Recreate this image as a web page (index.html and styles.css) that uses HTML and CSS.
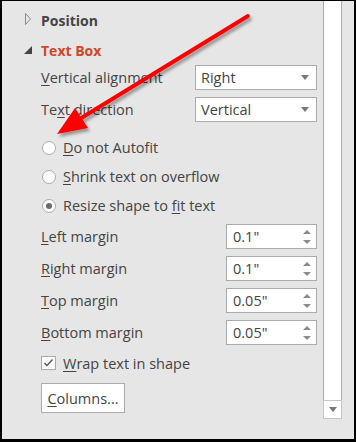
FILE: index.html
```html
<!DOCTYPE html>
<html lang="en">
<head>
  <meta charset="UTF-8" />
  <title>Format Shape - Text Box</title>
  <link rel="stylesheet" href="styles.css">
</head>
<body>

  <div class="frame">
    <div class="content">

      <div class="group-head">
        <svg class="caret" width="18" height="30"><polygon points="2.5,8.5 7.5,14 2.5,19.5" fill="none" stroke="#8a8a8a" stroke-width="1"/></svg>
        <span>Position</span>
      </div>
      <div class="group-head open">
        <svg class="caret" width="18" height="30"><polygon points="9,11 9,19 1,19" fill="#444"/></svg>
        <span>Text Box</span>
      </div>

      <div class="field">
        <label><u>V</u>ertical alignment</label>
        <div class="select"><span>Right</span><span class="drop"></span></div>
      </div>
      <div class="field">
        <label>Te<u>x</u>t direction</label>
        <div class="select"><span>Vertical</span><span class="drop"></span></div>
      </div>

      <div class="radios">
        <div class="radio-row"><span class="radio"></span><span><u>D</u>o not Autofit</span></div>
        <div class="radio-row"><span class="radio"></span><span><u>S</u>hrink text on overflow</span></div>
        <div class="radio-row"><span class="radio checked"></span><span>Resize shape to <u>f</u>it text</span></div>
      </div>

      <div class="spins">
        <div class="field">
          <label><u>L</u>eft margin</label>
          <div class="spin"><span>0.1"</span><span class="arrows"><span class="up"></span><span class="down"></span></span></div>
        </div>
        <div class="field">
          <label><u>R</u>ight margin</label>
          <div class="spin"><span>0.1"</span><span class="arrows"><span class="up"></span><span class="down"></span></span></div>
        </div>
        <div class="field">
          <label><u>T</u>op margin</label>
          <div class="spin"><span>0.05"</span><span class="arrows"><span class="up"></span><span class="down"></span></span></div>
        </div>
        <div class="field">
          <label><u>B</u>ottom margin</label>
          <div class="spin"><span>0.05"</span><span class="arrows"><span class="up"></span><span class="down"></span></span></div>
        </div>
      </div>

      <div class="check-row">
        <span class="checkbox">
          <svg width="13" height="12"><polyline points="2.5,6 5,8.5 10.5,2.5" fill="none" stroke="#555" stroke-width="1.4"/></svg>
        </span>
        <span><u>W</u>rap text in shape</span>
      </div>

      <button class="btn"><u>C</u>olumns...</button>
    </div>

    <div class="scrollbar">
      <div class="track"></div>
      <div class="scroll-btn"><span class="drop"></span></div>
    </div>
  </div>

  <!-- callout arrow over the panel -->
  <svg class="callout" width="356" height="442">
    <defs>
      <filter id="shade" x="-20%" y="-20%" width="140%" height="140%">
        <feDropShadow dx="2" dy="3" stdDeviation="1.6" flood-color="#000" flood-opacity="0.35"/>
      </filter>
    </defs>
    <g filter="url(#shade)" fill="#ff0000" stroke="#ff0000">
      <line x1="248" y1="16" x2="78" y2="120" stroke-width="4" stroke-linecap="round"/>
      <polygon points="57,134 75,108 88,128" stroke="none"/>
    </g>
  </svg>

</body>
</html>
```

FILE: styles.css
```css
body {
  margin: 0;
  padding: 0;
  position: relative;
  font-family: "Open Sans", "Noto Sans", sans-serif;
  font-size: 14.5px;
  color: #444;
}

.frame {
  width: 356px;
  height: 442px;
  box-sizing: border-box;
  border-style: solid;
  border-color: #000;
  border-width: 1px 2px 3px 2px;
  background: #e6e6e6;
  display: flex;
}

.content {
  width: 319px;
  box-sizing: border-box;
  padding: 4px 4px 0 39px;
}

u {
  text-decoration-thickness: 1px;
  text-underline-offset: 2px;
}

.group-head {
  height: 30px;
  margin-left: -18px;
  display: flex;
  align-items: center;
  font-weight: bold;
  font-size: 14px;
}

.group-head.open {
  color: #d24726;
}

.caret {
  flex: none;
  display: block;
}

.field {
  height: 25px;
  display: flex;
  align-items: center;
  justify-content: space-between;
  margin-bottom: 7px;
}

.select,
.spin {
  height: 25px;
  box-sizing: border-box;
  border: 1px solid #ababab;
  background: #fff;
  display: flex;
  align-items: center;
  justify-content: space-between;
}

.select {
  width: 122px;
  padding: 0 7px 0 5px;
}

.spin {
  width: 91px;
  padding: 0 5px 0 6px;
}

.drop {
  width: 0;
  height: 0;
  border-left: 4px solid transparent;
  border-right: 4px solid transparent;
  border-top: 5px solid #777;
}

.arrows {
  display: flex;
  flex-direction: column;
  gap: 6px;
}

.arrows .up {
  width: 0;
  height: 0;
  border-left: 4px solid transparent;
  border-right: 4px solid transparent;
  border-bottom: 4px solid #8a8a8a;
}

.arrows .down {
  width: 0;
  height: 0;
  border-left: 4px solid transparent;
  border-right: 4px solid transparent;
  border-top: 4px solid #8a8a8a;
}

.radios {
  margin-top: 11px;
  margin-bottom: 4px;
}

.radio-row {
  height: 29px;
  display: flex;
  align-items: center;
}

.radio {
  width: 14px;
  height: 14px;
  box-sizing: border-box;
  border: 1px solid #ababab;
  border-radius: 50%;
  background: #fff;
  margin: 0 7px 0 1px;
  display: flex;
  align-items: center;
  justify-content: center;
}

.radio.checked::after {
  content: "";
  width: 6px;
  height: 6px;
  border-radius: 50%;
  background: #6b6b6b;
}

.check-row {
  height: 26px;
  margin-top: -2px;
  display: flex;
  align-items: center;
}

.checkbox {
  width: 15px;
  height: 14px;
  box-sizing: border-box;
  border: 1px solid #ababab;
  background: #fff;
  margin-right: 7px;
  display: flex;
  align-items: center;
  justify-content: center;
}

.checkbox svg {
  display: block;
}

.btn {
  margin-top: 7px;
  height: 30px;
  width: 84px;
  padding: 0;
  border: 1px solid #ababab;
  background: #fff;
  font-family: inherit;
  font-size: 14.5px;
  color: #444;
}

.scrollbar {
  width: 19px;
  margin-left: 2px;
  display: flex;
  flex-direction: column;
}

.track {
  height: 399px;
  box-sizing: border-box;
  background: #fff;
  border-left: 1px solid #ababab;
  border-right: 1px solid #ababab;
}

.scroll-btn {
  height: 19px;
  box-sizing: border-box;
  border: 1px solid #c6c6c6;
  background: #fff;
  display: flex;
  align-items: center;
  justify-content: center;
}

.callout {
  position: absolute;
  top: 0;
  left: 0;
  pointer-events: none;
}
```
